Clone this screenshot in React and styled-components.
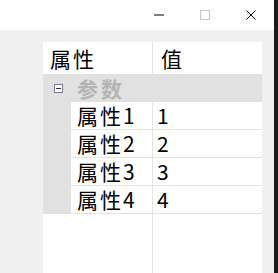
import React from 'react';
import styled, { createGlobalStyle } from 'styled-components';

const GlobalStyle = createGlobalStyle`
    html, body {
        margin: 0;
        padding: 0;
        background: #f0f0f0;
    }
    body {
        font-family: "Noto Sans CJK SC", "Noto Sans", sans-serif;
    }
`

const Window = styled.div`
    display: flex;
    width: 278px;
    height: 273px;
    overflow: hidden;
`
const Main = styled.div`
    flex: 1;
    display: flex;
    flex-direction: column;
`
const EdgeStrip = styled.div`
    width: 4px;
    background: #1c1c1c;
`
const TitleBar = styled.div`
    height: 30px;
    background: #ffffff;
    display: flex;
    justify-content: flex-end;
    align-items: center;
`
const CaptionButton = styled.div`
    width: 46px;
    height: 30px;
    display: flex;
    align-items: center;
    justify-content: center;
    svg { display: block; }
`
const Content = styled.div`
    flex: 1;
    background: #f0f0f0;
    padding: 12px 12px 0 43px;
    display: flex;
`
const Grid = styled.div`
    flex: 1;
    background: #ffffff;
    display: flex;
    flex-direction: column;
    font-size: 21px;
    letter-spacing: 2px;
    color: #000;
    position: relative;
`
const ColumnLine = styled.div`
    position: absolute;
    left: 109px;
    top: 0;
    bottom: 0;
    width: 1px;
    background: #e3e3e3;
`
const HeaderRow = styled.div`
    display: grid;
    grid-template-columns: 110px 1fr;
    height: 32px;
`
const HeaderCell = styled.div`
    display: flex;
    align-items: center;
    padding-left: ${p => p.$pad}px;
    line-height: 1;
`
const GroupRow = styled.div`
    height: 28px;
    background: #e1e1e1;
    display: flex;
    align-items: center;
    position: relative;
    z-index: 1;
`
const Toggle = styled.div`
    width: 28px;
    display: flex;
    justify-content: center;
    padding-left: 2px;
    box-sizing: border-box;
`
const GroupLabel = styled.span`
    color: #b4b4b4;
    font-weight: bold;
    padding-left: 6px;
    line-height: 1;
    letter-spacing: 3px;
`
const Row = styled.div`
    display: grid;
    grid-template-columns: 28px 81px 1px 1fr;
    height: 28px;
`
const Gutter = styled.div`
    background: #e1e1e1;
`
const Cell = styled.div`
    display: flex;
    align-items: center;
    padding-left: ${p => p.$pad}px;
    border-bottom: 1px solid #e3e3e3;
    line-height: 1;
`
const Divider = styled.div`
    background: #e3e3e3;
`

const MinusBox = () => (
    <svg width="9" height="9" viewBox="0 0 9 9">
        <rect x="0.5" y="0.5" width="8" height="8" fill="#fff" stroke="#7a7a8a" />
        <line x1="2" y1="4.5" x2="7" y2="4.5" stroke="#303050" />
    </svg>
)

const rows = [
    { name: '属性1', value: '1' },
    { name: '属性2', value: '2' },
    { name: '属性3', value: '3' },
    { name: '属性4', value: '4' },
]

const App = () => {
    return (
        <Window>
            <GlobalStyle />
            <Main>
                <TitleBar>
                    <CaptionButton>
                        <svg width="10" height="10" viewBox="0 0 10 10">
                            <line x1="0" y1="5" x2="10" y2="5" stroke="#000" strokeWidth="1" />
                        </svg>
                    </CaptionButton>
                    <CaptionButton>
                        <svg width="10" height="10" viewBox="0 0 10 10">
                            <rect x="0.5" y="0.5" width="9" height="9" fill="none" stroke="#c4c4c4" />
                        </svg>
                    </CaptionButton>
                    <CaptionButton>
                        <svg width="10" height="10" viewBox="0 0 10 10">
                            <path d="M0.5 0.5 L9.5 9.5 M9.5 0.5 L0.5 9.5" stroke="#000" strokeWidth="1" />
                        </svg>
                    </CaptionButton>
                </TitleBar>
                <Content>
                    <Grid>
                        <ColumnLine />
                        <HeaderRow>
                            <HeaderCell $pad={7}>属性</HeaderCell>
                            <HeaderCell $pad={8}>值</HeaderCell>
                        </HeaderRow>
                        <GroupRow>
                            <Toggle><MinusBox /></Toggle>
                            <GroupLabel>参数</GroupLabel>
                        </GroupRow>
                        {rows.map(r => (
                            <Row key={r.name}>
                                <Gutter />
                                <Cell $pad={6}>{r.name}</Cell>
                                <Divider />
                                <Cell $pad={4}>{r.value}</Cell>
                            </Row>
                        ))}
                    </Grid>
                </Content>
            </Main>
            <EdgeStrip />
        </Window>
    );
}

export default App;
